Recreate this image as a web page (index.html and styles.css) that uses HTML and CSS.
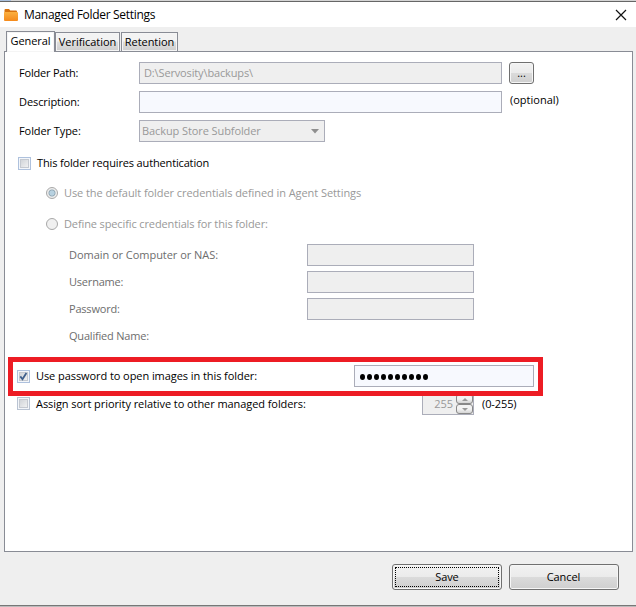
FILE: index.html
```html
<!DOCTYPE html>
<html lang="en">
<head>
<meta charset="utf-8">
<title>Managed Folder Settings</title>
<link rel="stylesheet" href="styles.css">
</head>
<body>
<div class="backdrop"><span class="behind b1">Activation</span><span class="behind b2">Current Action</span><span class="behind b3">Current Product</span></div>
<main class="dialog">
  <header class="titlebar">
    <svg class="folder" width="14" height="12" viewBox="0 0 14 12">
      <defs><linearGradient id="fg" x1="0" y1="0" x2="0" y2="1"><stop offset="0" stop-color="#fbb040"/><stop offset="1" stop-color="#f58a1b"/></linearGradient></defs>
      <path d="M.5 1Q.5 0 1.5 0H5L6.3 1.5H12Q13 1.5 13 2.5V9H.5Z" fill="#d9730d"/>
      <path d="M0 4Q0 3 1 3H13Q14 3 14 4V11Q14 12 13 12H1Q0 12 0 11Z" fill="url(#fg)"/>
    </svg>
    <h1>Managed Folder Settings</h1>
    <svg class="close" width="12" height="12" viewBox="0 0 12 12"><path d="M1 1L11 11M11 1L1 11" stroke="#111" stroke-width="1.2"/></svg>
  </header>
  <nav class="tabs">
    <span class="tab active">General</span><span class="tab verification">Verification</span><span class="tab retention">Retention</span>
  </nav>
  <section class="panel">
    <div class="row first"><label class="caption t-path">Folder Path:</label><div class="field wide off t-value">D:\Servosity\backups\</div><button class="btn browse">...</button></div>
    <div class="row gap7"><label class="caption">Description:</label><div class="field wide"></div><span class="optional">(optional)</span></div>
    <div class="row gap7"><label class="caption t-type">Folder Type:</label><div class="field combo off"><span class="t-combo">Backup Store Subfolder</span><svg width="8" height="5" viewBox="0 0 8 5"><path d="M0 0H8L4 4.6Z" fill="#8f8f8f"/></svg></div></div>
    <div class="row auth gap10"><i class="check"></i><span class="t-auth">This folder requires authentication</span></div>
    <div class="row radio-row gap8"><i class="radio on"></i><span class="t-default">Use the default folder credentials defined in Agent Settings</span></div>
    <div class="row radio-row gap9"><i class="radio"></i><span class="t-specific">Define specific credentials for this folder:</span></div>
    <div class="row cred gap9"><label class="t-domain">Domain or Computer or NAS:</label><div class="field off"></div></div>
    <div class="row cred gap5"><label>Username:</label><div class="field off"></div></div>
    <div class="row cred gap5"><label>Password:</label><div class="field off"></div></div>
    <div class="row cred gap5"><label>Qualified Name:</label></div>
    <div class="highlight">
      <i class="check"><svg width="9" height="9" viewBox="0 0 9 9"><path d="M1.3 4.4L3.5 7.2L7.4 1" fill="none" stroke="#3f5f8c" stroke-width="1.8"/></svg></i>
      <span class="lbl">Use password to open images in this folder:</span>
      <div class="field secret"><i></i><i></i><i></i><i></i><i></i><i></i><i></i><i></i><i></i><i></i></div>
    </div>
    <div class="row sort"><i class="check plain"></i><span class="lbl">Assign sort priority relative to other managed folders:</span>
      <div class="spinner"><span>255</span><div class="arrows"><b><svg width="6" height="3" viewBox="0 0 6 3"><path d="M0 3L3 0L6 3Z" fill="#999"/></svg></b><b><svg width="6" height="3" viewBox="0 0 6 3"><path d="M0 0L3 3L6 0Z" fill="#999"/></svg></b></div></div>
      <span class="range">(0-255)</span></div>
  </section>
  <footer class="actions"><button class="btn save"><span>Save</span></button><button class="btn cancel">Cancel</button></footer>
</main>
<div class="bottom"></div>
</body>
</html>
```
FILE: styles.css
```css
* { box-sizing: border-box; }
body {
  margin: 0; width: 636px; height: 607px; overflow: hidden;
  display: flex; flex-direction: column;
  font-family: "Open Sans", "Noto Sans", sans-serif; font-size: 11px; line-height: 16px;
  color: #000; white-space: nowrap; background: #efefef;
}
.backdrop { height: 2px; flex: none; background: linear-gradient(90deg, #a9bfdc 11px, #d4d4d4 11px); border-bottom: 1px solid #666; display: flex; overflow: hidden; position: relative; }
.behind { position: absolute; top: -11px; font-size: 11px; line-height: 14px; color: #555; }
.b1 { left: 35px; }
.b2 { left: 255px; }
.b3 { left: 519px; }
.dialog { height: 603px; display: flex; flex-direction: column; }
.titlebar { height: 25px; flex: none; background: #fff; display: flex; align-items: center; padding: 0 9px 0 4px; }
.folder { margin-right: 6px; }
.titlebar h1 { flex: 1; margin: 0; font-size: 12px; font-weight: 400; letter-spacing: -.31px; }
.tabs { height: 25px; flex: none; display: flex; align-items: flex-end; padding-left: 6px; position: relative; z-index: 1; margin-bottom: -1px; }
.tab { height: 20px; border: 1px solid #898c95; text-align: center; line-height: 17px; background: linear-gradient(#f3f3f3 45%, #dedede 50%, #cecece); box-shadow: inset 0 0 0 1px #f5f5f5; }
.tab.active { width: 49px; height: 21px; border-bottom: 0; background: #fff; line-height: 18px; letter-spacing: -.1px; }
.verification { width: 65px; letter-spacing: -.05px; }
.retention { width: 57px; margin-left: 1px; letter-spacing: -.05px; }
.panel { width: 629px; height: 501px; margin-left: 4px; flex: none; border: 1px solid #898c95; background: #fff; }
.row { height: 22px; display: flex; align-items: center; padding-left: 14px; }
.first { margin-top: 10px; }
.gap5 { margin-top: 5px; }
.gap7 { margin-top: 7px; }
.gap8 { margin-top: 8px; }
.gap9 { margin-top: 9px; }
.gap10 { margin-top: 10px; }
.caption { width: 120px; letter-spacing: -.08px; }
.t-path { letter-spacing: -.2px; }
.field { height: 22px; border: 1px solid #abadb9; background: #f7f9fe; padding: 0 4px; line-height: 20px; }
.field.off { background: #efefef; color: #999; }
.t-value { letter-spacing: -.14px; }
.t-combo { letter-spacing: -.09px; }
.wide { width: 363px; }
.combo { width: 186px; display: flex; align-items: center; justify-content: space-between; padding: 0 5px 0 2px; }
.btn { font: inherit; color: #000; padding: 0; border: 1px solid #707070; border-radius: 3px; box-shadow: inset 0 0 0 1px #f6f6f6; background: linear-gradient(#f2f2f2, #ebebeb 48%, #dbdbdb 50%, #cfcfcf); }
.browse { width: 25px; height: 22px; margin-left: 7px; }
.optional { margin: -4px 0 0 8px; }
.check { width: 13px; height: 13px; flex: none; border: 1px solid #aec1dd; background: linear-gradient(135deg, #c9cdd2, #f8f8f8); box-shadow: inset 0 0 0 1px #f3f6fa, inset 0 0 0 2px #c5c9d0; margin-right: 6px; display: flex; align-items: center; justify-content: center; }
.auth { padding-left: 13px; }
.t-auth { letter-spacing: -.15px; }
.t-default { letter-spacing: -.07px; }
.t-specific { letter-spacing: -.12px; }
.radio-row { padding-left: 41px; color: #999; }
.radio { width: 12px; height: 12px; border: 1px solid #a8a8a8; border-radius: 50%; background: #f0f0f0; margin-right: 6px; }
.radio.on { background: radial-gradient(circle, #b7d1e0 0 2.2px, #91a7b4 3px, #eee 4px); }
.cred { padding-left: 64px; color: #6d6d6d; }
.cred label { width: 238px; letter-spacing: -.2px; }
.cred .t-domain { letter-spacing: -.04px; }
.cred .field { width: 167px; }
.highlight { width: 535px; height: 39px; margin: 10px 0 0 3px; border: 5px solid #ed1c24; display: flex; align-items: center; padding: 0 0 1px 4px; position: relative; z-index: 1; }
.lbl { flex: none; letter-spacing: -.07px; }
.highlight .lbl { width: 318px; }
.secret { width: 180px; display: flex; align-items: center; gap: 2px; padding: 2px 0 0 5px; }
.secret i { width: 5px; height: 6px; border-radius: 50%; background: #000; }
.sort { padding-left: 12px; margin-top: -3px; }
.sort .lbl { width: 386px; }
.plain { border-color: #b9c3d2; margin-top: -1px; }
.spinner { width: 52px; height: 22px; border: 1px solid #abadb9; background: #efefef; display: flex; align-items: center; justify-content: flex-end; color: #999; }
.arrows { width: 17px; height: 20px; margin-left: 3px; display: flex; flex-direction: column; }
.arrows b { height: 10px; border: 1px solid #888; border-radius: 3px; background: linear-gradient(#f3f3f3 50%, #d5d5d5); display: flex; align-items: center; justify-content: center; }
.range { margin-left: 8px; letter-spacing: -.1px; }
.actions { display: flex; justify-content: flex-end; gap: 7px; padding: 12px 17px 0 0; }
.save, .cancel { width: 110px; height: 26px; letter-spacing: -.1px; }
.cancel { padding-right: 1px; }
.save { padding: 2px; }
.save span { display: block; height: 20px; line-height: 18px; border: 1px dotted #000; }
.bottom { height: 2px; flex: none; border-top: 1px solid #777; background: #bbb; }
```
